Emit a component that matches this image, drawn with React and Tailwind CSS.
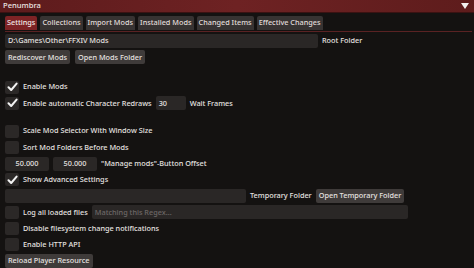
import React from 'react';

const tabs = ['Settings', 'Collections', 'Import Mods', 'Installed Mods', 'Changed Items', 'Effective Changes'];

function Check({ on }) {
  return (
    <div className="w-[14px] h-[13px] rounded-[2px] bg-[#2b2827] flex items-center justify-center flex-shrink-0">
      {on && (
        <svg width="11" height="10" viewBox="0 0 11 10">
          <path d="M1.5 5.2 L4.2 8 L9.6 1.6" fill="none" stroke="#f2f2f2" strokeWidth="2" strokeLinecap="round" strokeLinejoin="round" />
        </svg>
      )}
    </div>
  );
}

function Btn({ children, className = '' }) {
  return (
    <div className={`h-[14px] px-[3px] rounded-[2px] bg-[#3f3b3a] text-[#e6e2e0] flex items-center whitespace-nowrap ${className}`}>
      {children}
    </div>
  );
}

function Row({ children, className = '' }) {
  return <div className={`h-[14px] flex-shrink-0 flex items-center gap-[4px] whitespace-nowrap ${className}`}>{children}</div>;
}

function Field({ w, children, muted }) {
  return (
    <div className={`h-[14px] rounded-[2px] bg-[#2a2726] px-[3px] flex items-center flex-shrink-0 ${muted ? 'text-[#6d6766]' : 'text-[#e6e2e0]'}`} style={{ width: w }}>
      {children}
    </div>
  );
}

export default function App() {
  return (
    <div className="w-[474px] h-[268px] overflow-hidden bg-[#141211] text-[#e6e2e0] text-[7.3px] font-medium leading-none" style={{ fontFamily: '"Noto Sans", "Open Sans", sans-serif' }}>
      {/* title bar */}
      <div className="h-[13px] bg-gradient-to-r from-[#5d1b1c] via-[#6e2223] to-[#5e1c1c] flex items-center justify-between px-[3px] border-b border-[#3a1212]">
        <span className="text-[#ece6e4] text-[7.6px]">Penumbra</span>
        <svg width="8" height="6" viewBox="0 0 8 6" className="mr-[2px]"><path d="M0 0 H8 L4 6 Z" fill="#f3f0ef" /></svg>
      </div>

      {/* tabs */}
      <div className="mt-[3px] mx-[5px] flex gap-[3px] border-b border-[#5a2223] pb-[1px] w-[467px]">
        {tabs.map((t, i) => (
          <div key={t} className={`h-[14px] px-[2px] rounded-t-[2px] flex items-center ${i === 0 ? 'bg-[#7d2325] text-[#f0e8e6]' : 'bg-[#373332] text-[#e0dcda]'}`}>
            {t}
          </div>
        ))}
      </div>

      <div className="px-[5px] pt-[2px] flex flex-col gap-[2.25px]">
        <Row>
          <Field w={313}>D:\Games\Other\FFXIV Mods</Field>
          <span>Root Folder</span>
        </Row>
        <Row className="gap-[5px]">
          <Btn>Rediscover Mods</Btn>
          <Btn>Open Mods Folder</Btn>
        </Row>
        <div className="h-[11.25px] flex-shrink-0" />
        <Row className="gap-[3px]">
          <Check on />
          <span>Enable Mods</span>
        </Row>
        <Row className="gap-[3px]">
          <Check on />
          <span>Enable automatic Character Redraws</span>
          <Field w={30}>30</Field>
          <span>Wait Frames</span>
        </Row>
        <div className="h-[9.25px] flex-shrink-0" />
        <Row className="gap-[3px]">
          <Check />
          <span>Scale Mod Selector With Window Size</span>
        </Row>
        <Row className="gap-[3px]">
          <Check />
          <span>Sort Mod Folders Before Mods</span>
        </Row>
        <Row className="gap-[3px]">
          <div className="w-[44px] h-[14px] rounded-[2px] bg-[#2a2726] flex items-center justify-center">50.000</div>
          <div className="w-[44px] h-[14px] rounded-[2px] bg-[#2a2726] flex items-center justify-center">50.000</div>
          <span>"Manage mods"-Button Offset</span>
        </Row>
        <Row className="gap-[3px]">
          <Check on />
          <span>Show Advanced Settings</span>
        </Row>
        <Row>
          <Field w={241} />
          <span>Temporary Folder</span>
          <Btn>Open Temporary Folder</Btn>
        </Row>
        <Row className="gap-[3px]">
          <Check />
          <span>Log all loaded files</span>
          <div className="w-[316px] h-[14px] rounded-[2px] bg-[#2a2726] px-[3px] flex items-center text-[#6d6766]">Matching this Regex...</div>
        </Row>
        <Row className="gap-[3px]">
          <Check />
          <span>Disable filesystem change notifications</span>
        </Row>
        <Row className="gap-[3px]">
          <Check />
          <span>Enable HTTP API</span>
        </Row>
        <Row>
          <Btn>Reload Player Resource</Btn>
        </Row>
      </div>
    </div>
  );
}
